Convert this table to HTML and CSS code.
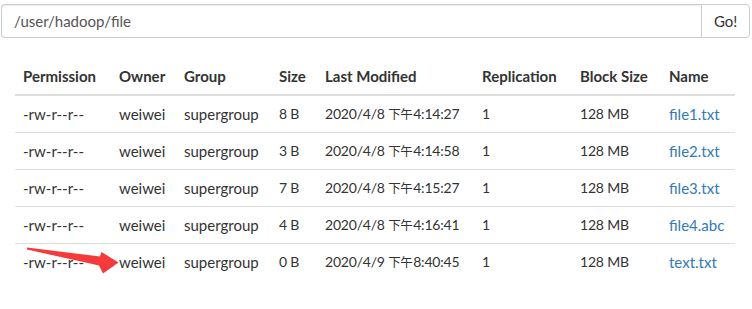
FILE: index.html
```html
<!DOCTYPE html>
<html>
<head>
<meta charset="utf-8">
<link rel="stylesheet" href="styles.css">
</head>
<body>
<div class="page">
  <div class="input-group">
    <input class="path-input" type="text" value="/user/hadoop/file">
    <button class="go-btn">Go!</button>
  </div>
  <div class="table-wrap">
    <table class="listing">
      <colgroup>
        <col class="c1"><col class="c2"><col class="c3"><col class="c4"><col class="c5"><col class="c6"><col class="c7"><col class="c8">
      </colgroup>
      <thead>
        <tr><th>Permission</th><th>Owner</th><th>Group</th><th>Size</th><th>Last Modified</th><th>Replication</th><th>Block Size</th><th>Name</th></tr>
      </thead>
      <tbody>
        <tr><td>-rw-r--r--</td><td>weiwei</td><td>supergroup</td><td class="num">8 B</td><td class="num">2020/4/8 <span class="cjk">下午</span>4:14:27</td><td class="num">1</td><td class="num">128 MB</td><td><a href="#">file1.txt</a></td></tr>
        <tr><td>-rw-r--r--</td><td>weiwei</td><td>supergroup</td><td class="num">3 B</td><td class="num">2020/4/8 <span class="cjk">下午</span>4:14:58</td><td class="num">1</td><td class="num">128 MB</td><td><a href="#">file2.txt</a></td></tr>
        <tr><td>-rw-r--r--</td><td>weiwei</td><td>supergroup</td><td class="num">7 B</td><td class="num">2020/4/8 <span class="cjk">下午</span>4:15:27</td><td class="num">1</td><td class="num">128 MB</td><td><a href="#">file3.txt</a></td></tr>
        <tr><td>-rw-r--r--</td><td>weiwei</td><td>supergroup</td><td class="num">4 B</td><td class="num">2020/4/8 <span class="cjk">下午</span>4:16:41</td><td class="num">1</td><td class="num">128 MB</td><td><a href="#">file4.abc</a></td></tr>
        <tr><td>-rw-r--r--</td><td>weiwei</td><td>supergroup</td><td class="num">0 B</td><td class="num">2020/4/9 <span class="cjk">下午</span>8:40:45</td><td class="num">1</td><td class="num">128 MB</td><td><a href="#">text.txt</a></td></tr>
      </tbody>
    </table>
    <svg class="arrow" width="752" height="309" viewBox="0 0 752 309">
      <polygon points="27,247.5 100,256.5 101.5,252 118.5,262.5 103,273.5 99,265.5 27,249.5" fill="#f43a3a"/>
    </svg>
  </div>
</div>
</body>
</html>
```

FILE: styles.css
```css
* { box-sizing: border-box; }
html, body { margin: 0; padding: 0; background: #fff; }
body {
  font-family: Lato, "Noto Sans CJK SC", sans-serif;
  font-size: 15px;
  line-height: 20px;
  color: #333;
}
.page {
  padding: 4px 2px 0 1px;
  width: 752px;
  height: 309px;
  position: relative;
}
.input-group {
  display: flex;
  height: 34px;
}
.path-input {
  flex: 1;
  height: 34px;
  margin: 0;
  padding: 6px 12px;
  border: 1px solid #ccc;
  border-right: none;
  border-radius: 4px 0 0 4px;
  font-family: inherit;
  font-size: 15px;
  color: #555;
  outline: none;
  box-shadow: inset 0 1px 1px rgba(0,0,0,0.075);
}
.go-btn {
  width: 49px;
  height: 34px;
  margin: 0;
  padding: 6px 12px;
  border: 1px solid #ccc;
  border-radius: 0 4px 4px 0;
  background: #fff;
  font-family: inherit;
  font-size: 15px;
  color: #333;
}
.table-wrap {
  padding: 20px 0 0 14px;
}
.listing {
  width: 720px;
  border-collapse: collapse;
  table-layout: fixed;
}
.c1 { width: 96px; }
.c2 { width: 65px; }
.c3 { width: 95px; }
.c4 { width: 46px; }
.c5 { width: 157px; }
.c6 { width: 98px; }
.c7 { width: 89px; }
.c8 { width: 74px; }
.listing th, .listing td {
  padding: 8px;
  text-align: left;
  white-space: nowrap;
  line-height: 20px;
}
.listing th {
  font-weight: bold;
  border-bottom: 2px solid #ddd;
}
.listing td {
  border-top: 1px solid #ddd;
}
.listing td.num {
  font-size: 14px;
  letter-spacing: -0.2px;
}
.listing .cjk {
  font-family: "Noto Sans CJK SC", sans-serif;
  font-size: 12.5px;
  letter-spacing: -0.5px;
  margin-right: 1px;
}
.listing tbody tr:first-child td { border-top: none; }
.listing a {
  color: #337ab7;
  text-decoration: none;
}
.arrow {
  position: absolute;
  left: 0;
  top: 0;
  pointer-events: none;
}
```
